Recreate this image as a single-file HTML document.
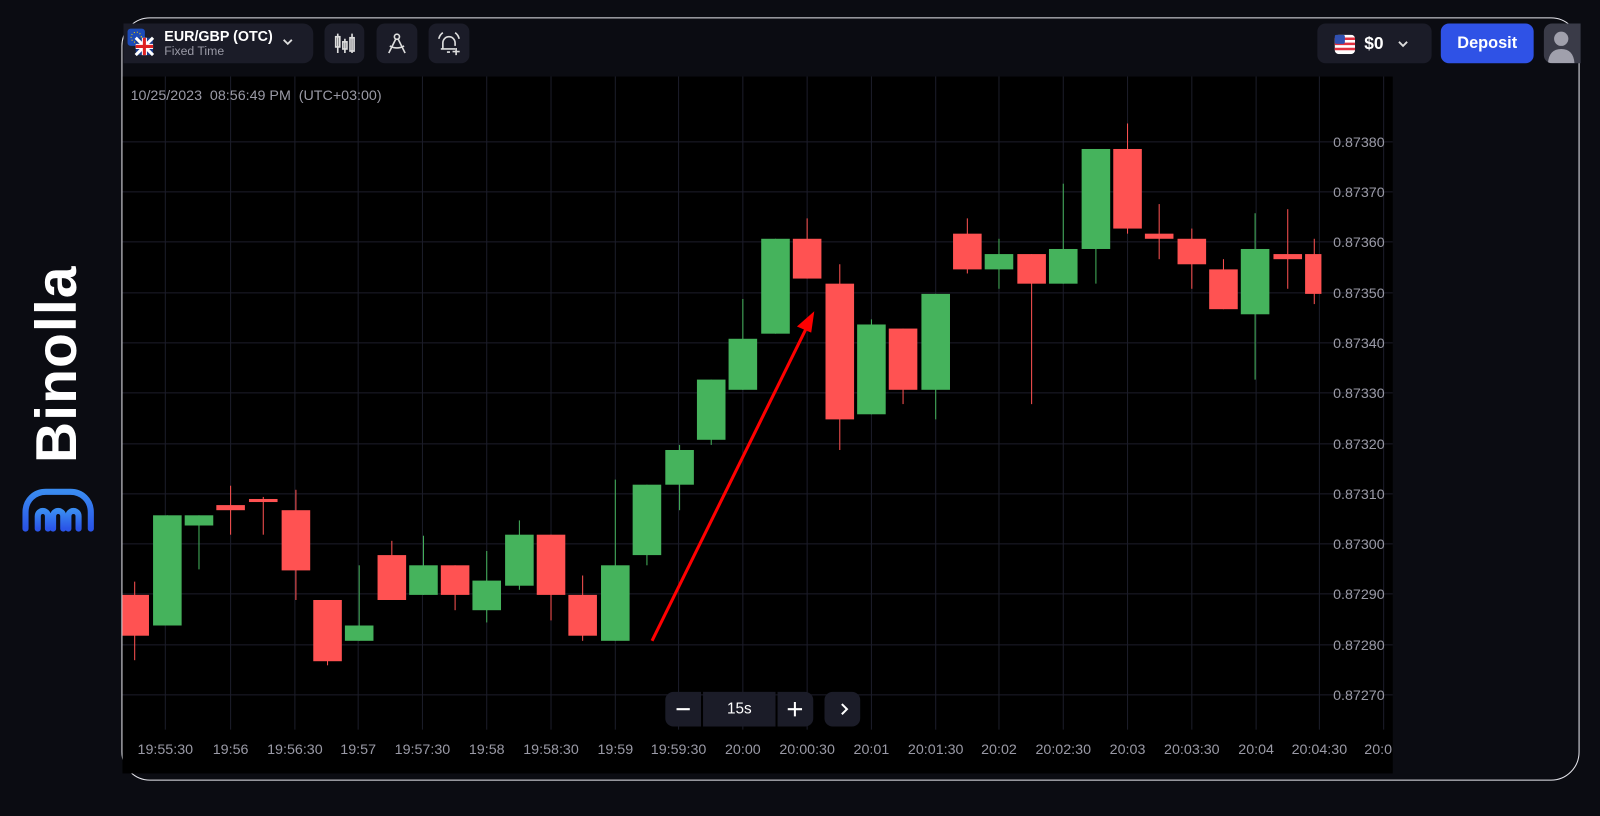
<!DOCTYPE html>
<html><head><meta charset="utf-8"><style>
body{margin:0;width:1600px;height:800px;background:#0b0c12;overflow:hidden;font-family:"Liberation Sans",sans-serif;position:relative}
#wrap{position:absolute;left:0;top:0;width:1568px;height:784px;transform:scale(1.0204);transform-origin:0 0}
.frame{position:absolute;left:119px;top:17px;width:1429px;height:748px;border:1.5px solid #e8e8ee;border-radius:28px;box-sizing:border-box;overflow:hidden;background:#0b0c12}
.btn{position:absolute;background:#1b1c28;border-radius:8px}
.logo{position:absolute;left:55px;top:357px;transform:translate(-50%,-50%) rotate(-90deg);color:#fff;font-weight:bold;font-size:56px;letter-spacing:1px}
</style></head><body><div id="wrap">
<div class="logo">Binolla</div>
<svg style="position:absolute;left:21px;top:478px" width="72" height="44" viewBox="0 0 72 44">
<defs><linearGradient id="g" x1="0" y1="0" x2="0" y2="1"><stop offset="0" stop-color="#3a8bf0"/><stop offset="1" stop-color="#2a55e8"/></linearGradient></defs>
<g fill="none" stroke="url(#g)" stroke-width="6" stroke-linecap="round">
<path d="M4 40V24C4 12 13 4 24 4H48C59 4 68 12 68 24V40"/>
<path d="M16 40V28C16 21 26 21 26 28V40"/>
<path d="M46 40V28C46 21 56 21 56 28V40"/>
<path d="M31 40V28C31 21 41 21 41 28V40"/>
</g></svg>
<div class="frame"></div>
<svg style="position:absolute;left:120px;top:75px" width="1245" height="683">
<rect width="1245" height="683" fill="#000"/>
<g stroke="#1c1d2a" stroke-width="1">
<line x1="0" x2="1245" y1="64" y2="64"/><line x1="0" x2="1245" y1="113" y2="113"/><line x1="0" x2="1245" y1="162" y2="162"/><line x1="0" x2="1245" y1="212" y2="212"/><line x1="0" x2="1245" y1="261" y2="261"/><line x1="0" x2="1245" y1="310" y2="310"/><line x1="0" x2="1245" y1="360" y2="360"/><line x1="0" x2="1245" y1="409" y2="409"/><line x1="0" x2="1245" y1="458" y2="458"/><line x1="0" x2="1245" y1="507" y2="507"/><line x1="0" x2="1245" y1="557" y2="557"/><line x1="0" x2="1245" y1="606" y2="606"/>
<line y1="0" y2="640" x1="42" x2="42"/><line y1="0" y2="640" x1="106" x2="106"/><line y1="0" y2="640" x1="169" x2="169"/><line y1="0" y2="640" x1="231" x2="231"/><line y1="0" y2="640" x1="294" x2="294"/><line y1="0" y2="640" x1="357" x2="357"/><line y1="0" y2="640" x1="420" x2="420"/><line y1="0" y2="640" x1="483" x2="483"/><line y1="0" y2="640" x1="545" x2="545"/><line y1="0" y2="640" x1="608" x2="608"/><line y1="0" y2="640" x1="671" x2="671"/><line y1="0" y2="640" x1="734" x2="734"/><line y1="0" y2="640" x1="797" x2="797"/><line y1="0" y2="640" x1="859" x2="859"/><line y1="0" y2="640" x1="922" x2="922"/><line y1="0" y2="640" x1="985" x2="985"/><line y1="0" y2="640" x1="1048" x2="1048"/><line y1="0" y2="640" x1="1111" x2="1111"/><line y1="0" y2="640" x1="1173" x2="1173"/><line y1="0" y2="640" x1="1236" x2="1236"/>
</g>
<g fill="#9a9aa6" font-size="14" font-family="Liberation Sans,sans-serif">
<text x="8" y="23">10/25/2023&#160; 08:56:49 PM&#160; (UTC+03:00)</text>
<g text-anchor="end"><text x="1237" y="69">0.87380</text><text x="1237" y="118">0.87370</text><text x="1237" y="167">0.87360</text><text x="1237" y="217">0.87350</text><text x="1237" y="266">0.87340</text><text x="1237" y="315">0.87330</text><text x="1237" y="365">0.87320</text><text x="1237" y="414">0.87310</text><text x="1237" y="463">0.87300</text><text x="1237" y="512">0.87290</text><text x="1237" y="562">0.87280</text><text x="1237" y="611">0.87270</text></g>
<g text-anchor="middle"><text x="42" y="664">19:55:30</text><text x="106" y="664">19:56</text><text x="169" y="664">19:56:30</text><text x="231" y="664">19:57</text><text x="294" y="664">19:57:30</text><text x="357" y="664">19:58</text><text x="420" y="664">19:58:30</text><text x="483" y="664">19:59</text><text x="545" y="664">19:59:30</text><text x="608" y="664">20:00</text><text x="671" y="664">20:00:30</text><text x="734" y="664">20:01</text><text x="797" y="664">20:01:30</text><text x="859" y="664">20:02</text><text x="922" y="664">20:02:30</text><text x="985" y="664">20:03</text><text x="1048" y="664">20:03:30</text><text x="1111" y="664">20:04</text><text x="1173" y="664">20:04:30</text></g>
<text x="1217" y="664">20:0</text>
</g>
</svg>
<svg style="position:absolute;left:0;top:0" width="1600" height="800">
<g id="cs"></g>
<line x1="639" y1="628" x2="792" y2="318" stroke="#f00" stroke-width="3"/>
<polygon points="798,305 781,320 795,326" fill="#f00"/>
</svg>
<div class="btn" style="left:121px;top:23px;width:186px;height:39px;border-radius:0 10px 10px 0"></div>
<svg style="position:absolute;left:124px;top:27px" width="32" height="32"><rect x="1" y="1" width="17" height="17" rx="3" fill="#1c4bb8"/><circle cx="9.5" cy="9.5" r="5" fill="none" stroke="#f5d000" stroke-width="1" stroke-dasharray="1 2"/><rect x="9" y="10" width="17" height="17" rx="3" fill="#1a3a8a"/><path d="M9 10L26 27M26 10L9 27" stroke="#fff" stroke-width="3"/><path d="M17.5 10V27M9 18.5H26" stroke="#fff" stroke-width="5"/><path d="M17.5 10V27M9 18.5H26" stroke="#d22" stroke-width="3"/></svg>
<div style="position:absolute;left:161px;top:27px;color:#fff;font-weight:bold;font-size:14px">EUR/GBP (OTC)</div>
<div style="position:absolute;left:161px;top:43px;color:#9a9aa6;font-size:12px">Fixed Time</div>
<svg style="position:absolute;left:275px;top:36px" width="14" height="10"><path d="M3 3L7 7L11 3" stroke="#ddd" stroke-width="1.8" fill="none"/></svg>
<div class="btn" style="left:318px;top:23px;width:39px;height:39px"></div>
<svg style="position:absolute;left:318px;top:23px" width="39" height="39" stroke="#ddd" stroke-width="1.6" fill="none"><rect x="11" y="13" width="4" height="10"/><line x1="13" y1="10" x2="13" y2="29"/><rect x="18" y="18" width="4" height="7"/><line x1="20" y1="15" x2="20" y2="29"/><rect x="25" y="14" width="4" height="13"/><line x1="27" y1="10" x2="27" y2="29"/></svg>
<div class="btn" style="left:369px;top:23px;width:40px;height:39px"></div>
<svg style="position:absolute;left:369px;top:23px" width="40" height="39" stroke="#ddd" stroke-width="1.6" fill="none"><circle cx="20" cy="13" r="2.5"/><path d="M19 15L12 29M21 15L28 29M13 22Q20 26 27 22"/></svg>
<div class="btn" style="left:420px;top:23px;width:40px;height:39px"></div>
<svg style="position:absolute;left:420px;top:23px" width="40" height="39" stroke="#ddd" stroke-width="1.6" fill="none"><path d="M12 25H26M14 25V19A6 6 0 0 1 26 19V22M18 28H21M10 15Q11 11 14 9M30 15Q29 11 26 9M27 24V31M23.5 27.5H30.5"/></svg>
<div class="btn" style="left:1291px;top:23px;width:112px;height:39px"></div>
<svg style="position:absolute;left:1308px;top:34px" width="20" height="19"><rect width="20" height="19" rx="4" fill="#fff"/><path d="M0 4H20M0 9H20M0 14H20" stroke="#e03040" stroke-width="2.5"/><rect width="10" height="9" rx="2" fill="#3050b0"/></svg>
<div style="position:absolute;left:1337px;top:33px;color:#fff;font-weight:bold;font-size:17px">$0</div>
<svg style="position:absolute;left:1368px;top:38px" width="14" height="10"><path d="M3 3L7 7L11 3" stroke="#ddd" stroke-width="1.8" fill="none"/></svg>
<div style="position:absolute;left:1412px;top:23px;width:91px;height:39px;background:#2f52e6;border-radius:8px;color:#fff;font-weight:bold;font-size:16px;line-height:39px;text-align:center">Deposit</div>
<div style="position:absolute;left:1513px;top:23px;width:36px;height:39px;background:#3a3b48;border-radius:8px 0 0 8px;overflow:hidden"><svg width="36" height="39"><circle cx="17" cy="15" r="7" fill="#a0a0ac"/><path d="M4 39Q5 25 17 25Q29 25 30 39Z" fill="#a0a0ac"/></svg></div>
<div class="btn" style="left:652px;top:678px;width:35px;height:34px;border-radius:8px 0 0 8px"></div>
<div class="btn" style="left:689px;top:678px;width:71px;height:34px;border-radius:0;color:#fff;font-size:15px;line-height:34px;text-align:center">15s</div>
<div class="btn" style="left:762px;top:678px;width:35px;height:34px;border-radius:0 8px 8px 0"></div>
<div class="btn" style="left:808px;top:678px;width:35px;height:34px"></div>
<svg style="position:absolute;left:652px;top:678px" width="200" height="34" stroke="#fff" stroke-width="2" fill="none"><path d="M11 17H24M120 17H134M127 10V24M173 12L178 17L173 22"/></svg>
</div>
<script>
var d=[[120,583,623,570,647,0],[150,505,613,505,613,1],[181,505,515,505,558,1],[212,495,500,476,524,0],[244,489,491,487,524,0],[276,500,559,480,588,0],[307,588,648,588,652,0],[338,613,628,554,628,1],[370,544,588,530,588,0],[401,554,583,525,583,1],[432,554,583,554,598,0],[463,569,598,540,610,1],[495,524,574,510,578,1],[526,524,583,524,608,0],[557,583,623,564,628,0],[589,554,628,470,628,1],[620,475,544,475,554,1],[652,441,475,436,500,1],[683,372,431,372,436,1],[714,332,382,293,382,1],[746,234,327,234,327,1],[777,234,273,214,273,0],[809,278,411,259,441,0],[840,318,406,313,406,1],[871,322,382,322,396,0],[903,288,382,288,411,1],[934,229,264,214,268,0],[965,249,264,234,283,1],[997,249,278,249,396,0],[1028,244,278,180,278,1],[1060,146,244,146,278,1],[1091,146,224,121,229,0],[1122,229,234,200,254,0],[1154,234,259,224,283,0],[1185,264,303,254,303,0],[1216,244,308,209,372,1],[1248,249,254,205,283,0],[1279,249,288,234,298,0]];
var s='';d.forEach(function(c){var col=c[5]?'#45b35c':'#ff5252';var w=c[0]==1279?16:28;var x=c[0];if(x==120)w=26;var cx=x+(x==120?12:14);if(x==1279)cx=1288;
s+='<line x1="'+cx+'" x2="'+cx+'" y1="'+c[3]+'" y2="'+c[4]+'" stroke="'+col+'" stroke-width="1"/><rect x="'+x+'" y="'+c[1]+'" width="'+w+'" height="'+Math.max(c[2]-c[1],3)+'" fill="'+col+'"/>';});
document.getElementById('cs').innerHTML=s;
</script>
</body></html>
